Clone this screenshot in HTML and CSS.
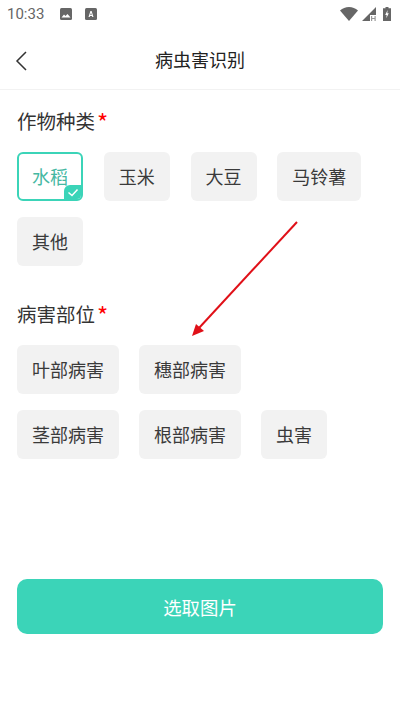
FILE: index.html
```html
<!DOCTYPE html>
<html lang="zh">
<head>
<meta charset="utf-8">
<title>病虫害识别</title>
<link rel="stylesheet" href="styles.css">
</head>
<body>
<div class="status">
  <span class="time">10:33</span>
  <svg class="note first" viewBox="0 0 12 12"><rect width="12" height="12" rx="1.500" fill="#666"/><path d="M1.500 9.500 4 6.500l1.500 1.500L7.500 6l3 3.500z" fill="#fff"/></svg>
  <svg class="note" viewBox="0 0 12 12"><rect width="12" height="12" rx="1.500" fill="#666"/><path d="M3.500 9 5.400 3h1.200l1.900 6H7.300L7 8H5l-.3 1zM5.300 7h1.400L6 4.600z" fill="#fff"/></svg>
  <span class="status-right">
    <svg class="wifi" viewBox="0 0 18 14"><path d="M0 3.500C2.500 1.300 5.600 0 9 0s6.500 1.300 9 3.500L9 14z" fill="#666"/></svg>
    <svg class="signal" viewBox="0 0 14 14"><path d="M14 0v8H8v6H0z" fill="#666"/><path d="M9 9h1.200v5H9zm3.500 0h1.200v5h-1.200zM10 11h3v1h-3z" fill="#999"/></svg>
    <svg class="battery" viewBox="0 0 8 14"><path d="M2.500 0h3v1.200H8V14H0V1.200h2.500z" fill="#666"/><path d="M4.600 3 2.200 8h1.500l-.4 3.200L5.800 6.300H4.300z" fill="#fff"/></svg>
  </span>
</div>
<header class="topbar">
  <svg class="back" viewBox="0 0 12 20"><path d="M11 1 2 10l9 9" fill="none" stroke="#333" stroke-width="1.500"/></svg>
  <h1>病虫害识别</h1>
</header>
<main class="content">
  <section class="group">
    <h2>作物种类<span class="req">*</span></h2>
    <div class="chips">
      <div class="chip-row crop-row">
        <span class="chip selected">水稻<svg class="tick" viewBox="0 0 18 15"><path d="M0 15 V6 a6 6 0 0 1 6-6 H18 V9 a6 6 0 0 1-6 6z" fill="#3bd4b8"/><path d="M4.500 7.500 8 10.500 13.500 4.500" fill="none" stroke="#fff" stroke-width="1.500"/></svg></span>
        <span class="chip">玉米</span>
        <span class="chip">大豆</span>
        <span class="chip">马铃薯</span>
      </div>
      <div class="chip-row">
        <span class="chip">其他</span>
      </div>
    </div>
  </section>
  <section class="group">
    <h2>病害部位<span class="req">*</span></h2>
    <div class="chips">
      <div class="chip-row">
        <span class="chip">叶部病害</span>
        <span class="chip">穗部病害</span>
      </div>
      <div class="chip-row">
        <span class="chip">茎部病害</span>
        <span class="chip">根部病害</span>
        <span class="chip">虫害</span>
      </div>
    </div>
  </section>
  <button class="pick">选取图片</button>
</main>
<svg class="arrow" viewBox="0 0 400 711"><path d="M297 222 199 328" fill="none" stroke="#e01018" stroke-width="2"/><path d="M192 336 196 324 204 331z" fill="#e01018"/></svg>
</body>
</html>
```
FILE: styles.css
```css
* { box-sizing: border-box; }
html, body { margin: 0; padding: 0; }
body {
  width: 400px;
  height: 711px;
  position: relative;
  overflow: hidden;
  background: #fff;
  color: #333;
  font-family: "Noto Sans CJK SC", "Noto Sans", sans-serif;
}
.status {
  height: 28px;
  padding: 0 9px 0 7px;
  display: flex;
  align-items: center;
  font-family: Roboto, sans-serif;
}
.time { font-size: 15px; color: #666; width: 53px; }
.note { width: 12px; height: 12px; margin-right: 13px; }
.status-right { margin-left: auto; display: flex; align-items: center; gap: 4px; }
.wifi { width: 18px; height: 14px; }
.signal { width: 14px; height: 14px; }
.battery { width: 8px; height: 14px; margin-left: 3px; }
.topbar {
  height: 62px;
  border-bottom: 1px solid #f2f2f2;
  position: relative;
  display: flex;
  align-items: center;
  justify-content: center;
}
.topbar h1 { margin: 0; font-size: 18px; font-weight: 400; color: #222; line-height: 24px; }
.back { position: absolute; left: 15px; top: 23px; width: 12px; height: 20px; }
.content { padding: 16px 17px 0; }
.group { margin-bottom: 33px; }
h2 {
  margin: 0 0 16px;
  font-size: 19.500px;
  font-weight: 400;
  line-height: 30px;
  color: #333;
}
.req { color: #f00; margin-left: 2px; font-size: 24px; line-height: 20px; vertical-align: -3px; }
.chips { display: flex; flex-direction: column; gap: 16px; }
.chip-row { display: flex; gap: 20px; }
.crop-row { gap: 20.750px; }
.chip {
  position: relative;
  height: 49px;
  padding: 0 15px;
  border-radius: 6px;
  background: #f2f2f2;
  font-size: 18px;
  line-height: 48px;
  color: #3a3a3a;
  white-space: nowrap;
}
.chip.selected {
  background: #fff;
  border: 2px solid #3bd4b8;
  line-height: 44px;
  padding: 0 13px;
  color: #45b8a2;
  overflow: hidden;
}
.tick { position: absolute; right: -1px; bottom: -1px; width: 18px; height: 15px; }
.pick {
  display: block;
  width: 366px;
  height: 55px;
  margin-top: 120px;
  border: 0;
  border-radius: 10px;
  background: #3bd4b8;
  color: #fff;
  font: 400 18.400px "Noto Sans CJK SC", sans-serif;
}
.arrow { position: absolute; left: 0; top: 0; width: 400px; height: 711px; pointer-events: none; }
```
